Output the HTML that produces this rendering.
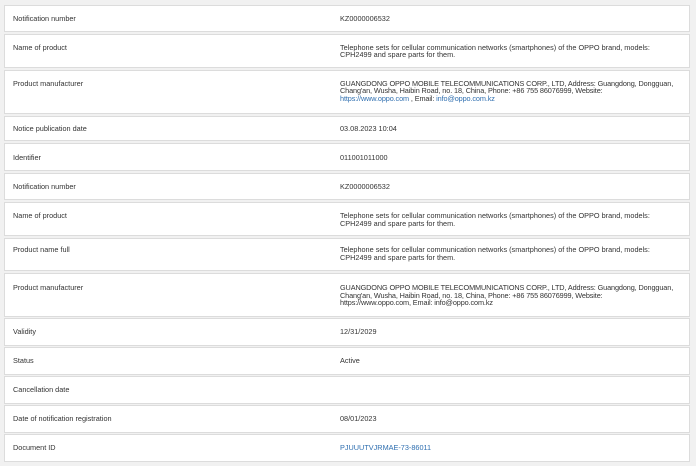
<!DOCTYPE html>
<html><head><style>
body{margin:0;width:696px;height:466px;background:#f1f1f1;font-family:"Liberation Sans",sans-serif;font-size:7.3px;color:#333;position:relative;overflow:hidden}
.c{position:absolute;left:4px;width:686px;background:#fff;border:1px solid #dcdcdc;box-sizing:border-box}
.l,.v{position:absolute;line-height:7.7px;white-space:nowrap}
.l{left:8px}
.v{left:335px}
.m{letter-spacing:-0.12px}
a{color:#2f6fb0;text-decoration:none}
</style></head><body>
<div class="c" style="top:5px;height:27px"><span class="l" style="top:9px">Notification number</span><span class="v" style="top:9px">KZ0000006532</span></div>
<div class="c" style="top:34px;height:34px"><span class="l" style="top:8.5px">Name of product</span><span class="v" style="top:8.5px">Telephone sets for cellular communication networks (smartphones) of the OPPO brand, models:<br>CPH2499 and spare parts for them.</span></div>
<div class="c" style="top:70px;height:44px"><span class="l" style="top:8.5px">Product manufacturer</span><span class="v m" style="top:8.5px">GUANGDONG OPPO MOBILE TELECOMMUNICATIONS CORP., LTD, Address: Guangdong, Dongguan,<br>Chang'an, Wusha, Haibin Road, no. 18, China, Phone: +86 755 86076999, Website:<br><a>https://www.oppo.com</a> , Email: <a>info@oppo.com.kz</a></span></div>
<div class="c" style="top:116px;height:25px"><span class="l" style="top:8px">Notice publication date</span><span class="v" style="top:8px">03.08.2023 10:04</span></div>
<div class="c" style="top:143px;height:28px"><span class="l" style="top:10px">Identifier</span><span class="v" style="top:10px">011001011000</span></div>
<div class="c" style="top:173px;height:27px"><span class="l" style="top:9px">Notification number</span><span class="v" style="top:9px">KZ0000006532</span></div>
<div class="c" style="top:202px;height:34px"><span class="l" style="top:9px">Name of product</span><span class="v" style="top:9px">Telephone sets for cellular communication networks (smartphones) of the OPPO brand, models:<br>CPH2499 and spare parts for them.</span></div>
<div class="c" style="top:238px;height:33px"><span class="l" style="top:7px">Product name full</span><span class="v" style="top:7px">Telephone sets for cellular communication networks (smartphones) of the OPPO brand, models:<br>CPH2499 and spare parts for them.</span></div>
<div class="c" style="top:273px;height:44px"><span class="l" style="top:10px">Product manufacturer</span><span class="v m" style="top:10px">GUANGDONG OPPO MOBILE TELECOMMUNICATIONS CORP., LTD, Address: Guangdong, Dongguan,<br>Chang'an, Wusha, Haibin Road, no. 18, China, Phone: +86 755 86076999, Website:<br>https://www.oppo.com, Email: info@oppo.com.kz</span></div>
<div class="c" style="top:318px;height:28px"><span class="l" style="top:9px">Validity</span><span class="v" style="top:9px">12/31/2029</span></div>
<div class="c" style="top:347px;height:28px"><span class="l" style="top:9px">Status</span><span class="v" style="top:9px">Active</span></div>
<div class="c" style="top:376px;height:28px"><span class="l" style="top:9px">Cancellation date</span></div>
<div class="c" style="top:405px;height:28px"><span class="l" style="top:9px">Date of notification registration</span><span class="v" style="top:9px">08/01/2023</span></div>
<div class="c" style="top:434px;height:28px"><span class="l" style="top:9px">Document ID</span><span class="v" style="top:9px"><a>PJUUUTVJRMAE-73-86011</a></span></div>
</body></html>
